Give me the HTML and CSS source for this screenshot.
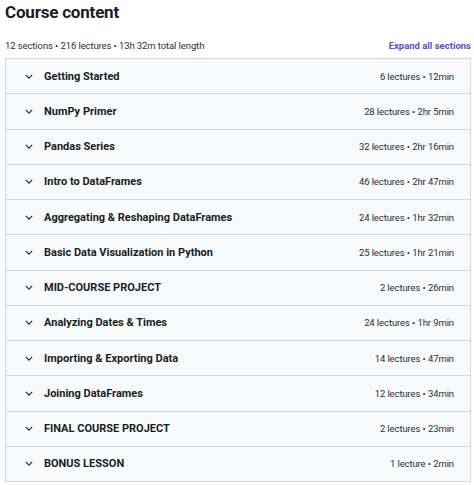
FILE: index.html
```html
<!DOCTYPE html>
<html>
<head>
<meta charset="utf-8">
<link rel="stylesheet" href="styles.css">
</head>
<body>
<div class="page">
  <h2 class="title">Course content</h2>
  <div class="summary">
    <span class="stats">12 sections • 216 lectures • 13h 32m total length</span>
    <span class="expand">Expand all sections</span>
  </div>
  <div class="sections">
    <div class="row"><span class="chev"><svg viewBox="0 0 10 6" width="8" height="5"><path d="M1 1 L5 5 L9 1" fill="none" stroke="#2d2f31" stroke-width="1.6"/></svg></span><span class="name">Getting Started</span><span class="meta">6 lectures • 12min</span></div>
    <div class="row"><span class="chev"><svg viewBox="0 0 10 6" width="8" height="5"><path d="M1 1 L5 5 L9 1" fill="none" stroke="#2d2f31" stroke-width="1.6"/></svg></span><span class="name">NumPy Primer</span><span class="meta">28 lectures • 2hr 5min</span></div>
    <div class="row"><span class="chev"><svg viewBox="0 0 10 6" width="8" height="5"><path d="M1 1 L5 5 L9 1" fill="none" stroke="#2d2f31" stroke-width="1.6"/></svg></span><span class="name">Pandas Series</span><span class="meta">32 lectures • 2hr 16min</span></div>
    <div class="row"><span class="chev"><svg viewBox="0 0 10 6" width="8" height="5"><path d="M1 1 L5 5 L9 1" fill="none" stroke="#2d2f31" stroke-width="1.6"/></svg></span><span class="name">Intro to DataFrames</span><span class="meta">46 lectures • 2hr 47min</span></div>
    <div class="row"><span class="chev"><svg viewBox="0 0 10 6" width="8" height="5"><path d="M1 1 L5 5 L9 1" fill="none" stroke="#2d2f31" stroke-width="1.6"/></svg></span><span class="name">Aggregating &amp; Reshaping DataFrames</span><span class="meta">24 lectures • 1hr 32min</span></div>
    <div class="row"><span class="chev"><svg viewBox="0 0 10 6" width="8" height="5"><path d="M1 1 L5 5 L9 1" fill="none" stroke="#2d2f31" stroke-width="1.6"/></svg></span><span class="name">Basic Data Visualization in Python</span><span class="meta">25 lectures • 1hr 21min</span></div>
    <div class="row"><span class="chev"><svg viewBox="0 0 10 6" width="8" height="5"><path d="M1 1 L5 5 L9 1" fill="none" stroke="#2d2f31" stroke-width="1.6"/></svg></span><span class="name">MID-COURSE PROJECT</span><span class="meta">2 lectures • 26min</span></div>
    <div class="row"><span class="chev"><svg viewBox="0 0 10 6" width="8" height="5"><path d="M1 1 L5 5 L9 1" fill="none" stroke="#2d2f31" stroke-width="1.6"/></svg></span><span class="name">Analyzing Dates &amp; Times</span><span class="meta">24 lectures • 1hr 9min</span></div>
    <div class="row"><span class="chev"><svg viewBox="0 0 10 6" width="8" height="5"><path d="M1 1 L5 5 L9 1" fill="none" stroke="#2d2f31" stroke-width="1.6"/></svg></span><span class="name">Importing &amp; Exporting Data</span><span class="meta">14 lectures • 47min</span></div>
    <div class="row"><span class="chev"><svg viewBox="0 0 10 6" width="8" height="5"><path d="M1 1 L5 5 L9 1" fill="none" stroke="#2d2f31" stroke-width="1.6"/></svg></span><span class="name">Joining DataFrames</span><span class="meta">12 lectures • 34min</span></div>
    <div class="row"><span class="chev"><svg viewBox="0 0 10 6" width="8" height="5"><path d="M1 1 L5 5 L9 1" fill="none" stroke="#2d2f31" stroke-width="1.6"/></svg></span><span class="name">FINAL COURSE PROJECT</span><span class="meta">2 lectures • 23min</span></div>
    <div class="row"><span class="chev"><svg viewBox="0 0 10 6" width="8" height="5"><path d="M1 1 L5 5 L9 1" fill="none" stroke="#2d2f31" stroke-width="1.6"/></svg></span><span class="name">BONUS LESSON</span><span class="meta">1 lecture • 2min</span></div>
  </div>
</div>
</body>
</html>
```
FILE: styles.css
```css
html, body {
  margin: 0;
  padding: 0;
  background: #ffffff;
}
body {
  font-family: Roboto, "Liberation Sans", sans-serif;
  color: #2d2f31;
}
.page {
  padding: 0 3px 0 5px;
}
.title {
  margin: 0;
  font-size: 17px;
  line-height: 24px;
  font-weight: 700;
  letter-spacing: -0.2px;
  color: #1c1d1f;
}
.summary {
  display: flex;
  justify-content: space-between;
  align-items: center;
  margin-top: 14px;
  height: 14px;
  font-size: 9.5px;
  margin-bottom: 6px;
}
.stats {
  color: #2d2f31;
  letter-spacing: -0.1px;
}
.expand {
  color: #5b4ec7;
  font-weight: 700;
}
.sections {
  border: 1px solid #d1d7dc;
}
.row {
  display: flex;
  align-items: center;
  height: 34.25px;
  background: #f7f9fa;
  border-bottom: 1px solid #d1d7dc;
  padding: 0 16px 0 19px;
}
.row:last-child {
  border-bottom: none;
}
.chev {
  display: flex;
  width: 19px;
}
.name {
  flex: 1;
  font-weight: 700;
  font-size: 11px;
  color: #1c1d1f;
}
.meta {
  font-size: 9.5px;
  letter-spacing: -0.1px;
  color: #2d2f31;
}
```
